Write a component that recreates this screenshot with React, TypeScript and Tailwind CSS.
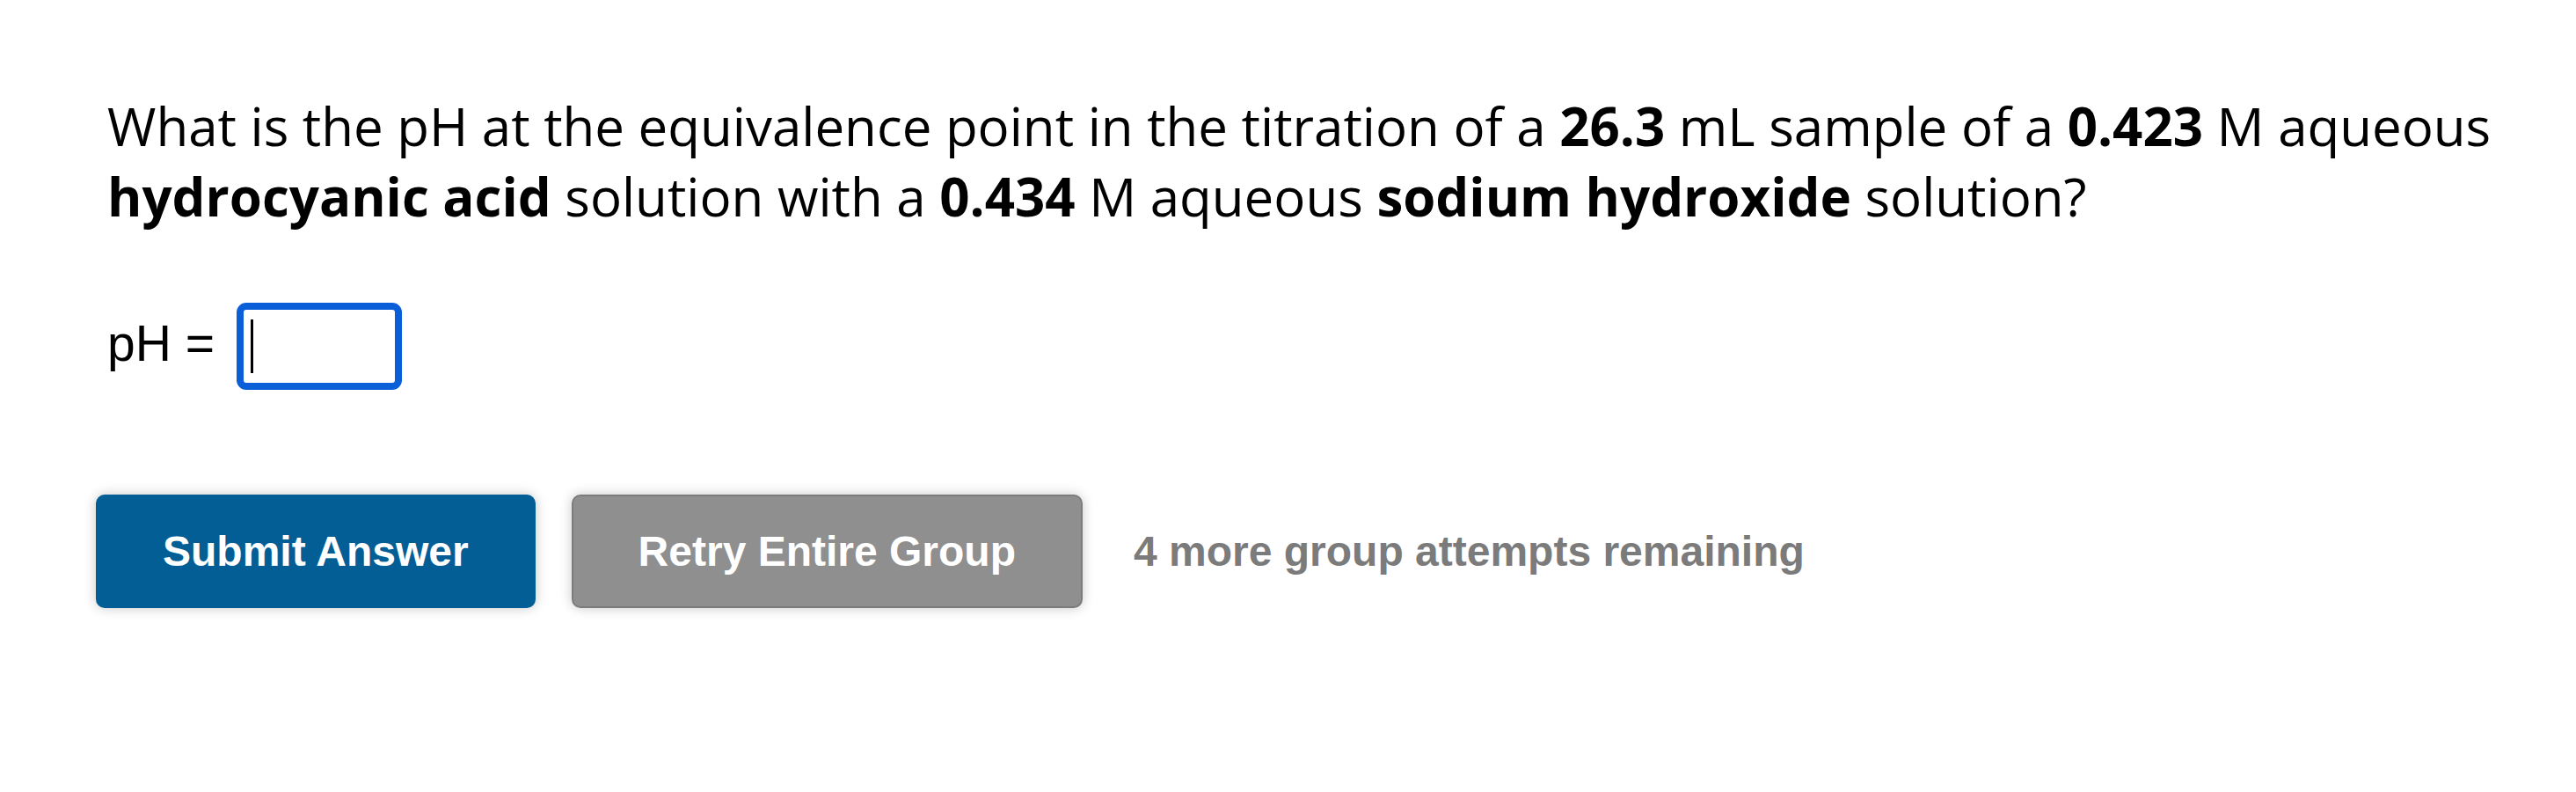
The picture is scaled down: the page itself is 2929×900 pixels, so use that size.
const Question = () => {
  return (
    <p className="text-[60px] leading-[80px] text-black">
      What is the pH at the equivalence point in the titration of a <b className="font-bold">26.3</b> mL sample of a{" "}
      <b className="font-bold">0.423</b> M aqueous <b className="font-bold">hydrocyanic acid</b> solution with a{" "}
      <b className="font-bold">0.434</b> M aqueous <b className="font-bold">sodium hydroxide</b> solution?
    </p>
  );
};

export default function App() {
  return (
    <div className="w-[2929px] h-[900px] bg-white pl-[122px] pt-[103px] font-['Open_Sans',sans-serif]">
      <div className="w-[2760px]">
        <Question />
      </div>

      <div className="mt-[81px] flex items-center">
        <span className="mb-[6px] font-['Liberation_Sans',Arial,sans-serif] text-[57px] leading-none text-black">
          pH =
        </span>
        <div className="ml-[25px] flex h-[99px] w-[188px] items-center rounded-[11px] border-[8px] border-[#0a5ed7] bg-white pl-[8px]">
          <span className="h-[61px] w-[3px] bg-black" />
        </div>
      </div>

      <div className="-ml-[13px] mt-[119px] flex items-center font-['Liberation_Sans',Arial,sans-serif]">
        <button className="flex h-[129px] items-center rounded-[10px] bg-[#045e96] px-[76px] text-[48px] font-bold text-white shadow-[0_0_14px_rgba(0,0,0,0.22)]">
          Submit Answer
        </button>
        <button className="ml-[41px] flex h-[129px] items-center rounded-[10px] border-[2px] border-[#7c7c7c] bg-[#8f8f8f] px-[74px] text-[48px] font-bold text-white shadow-[0_0_14px_rgba(0,0,0,0.22)]">
          Retry Entire Group
        </button>
        <span className="ml-[58px] text-[48px] font-bold text-[#7b7b7b]">4 more group attempts remaining</span>
      </div>
    </div>
  );
}
